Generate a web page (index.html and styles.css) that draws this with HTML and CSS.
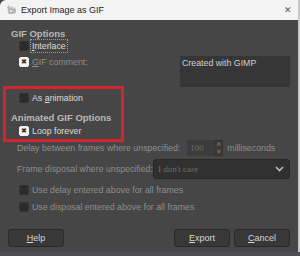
FILE: index.html
```html
<!DOCTYPE html>
<html lang="en">
<head>
    <meta charset="UTF-8">
    <title>Export Image as GIF</title>
    <link rel="stylesheet" href="styles.css">
</head>
<body>
    <div class="window">
        <div class="titlebar">
            <svg class="app-icon" width="12" height="12" viewBox="0 0 12 12">
                <path d="M1 3 L3 1 L4 4 L6 2 L7 5 L9 3 L10 6 Q11 9 7 10 L3 10 Q1 8 2 6 Z" fill="#b8b8b8"/>
                <circle cx="5" cy="7" r="1" fill="#f3f3f3"/>
            </svg>
            <span class="title">Export Image as GIF</span>
            <span class="close">&#x2715;</span>
        </div>

        <div class="content">
            <div class="heading">GIF Options</div>
            <div class="row check">
                <span class="box"></span>
                <span class="label focus"><u>I</u>nterlace</span>
            </div>
            <div class="comment-row">
                <div class="row check">
                    <span class="box checked">&#x2716;</span>
                    <span class="label dim"><u>G</u>IF comment:</span>
                </div>
                <div class="comment">Created with GIMP</div>
            </div>

            <div class="row check gap-anim">
                <span class="box"></span>
                <span class="label">As <u>a</u>nimation</span>
            </div>
            <div class="heading gap-head">Animated GIF Options</div>
            <div class="row check gap-loop">
                <span class="box checked">&#x2716;</span>
                <span class="label">Loop forever</span>
            </div>

            <div class="row field gap-delay">
                <span class="label dim">Delay between frames where unspecified:</span>
                <div class="spin">
                    <span class="spin-value">100</span>
                    <div class="spin-buttons">
                        <span class="spin-btn">&#x2C4;</span>
                        <span class="spin-btn">&#x2C5;</span>
                    </div>
                </div>
                <span class="label dim">milliseconds</span>
            </div>
            <div class="row field gap-disposal">
                <span class="label dim">Frame disposal where unspecified:</span>
                <div class="select">
                    <span>I don't care</span>
                    <svg width="9" height="6" viewBox="0 0 9 6"><path d="M1 1 L4.5 4.5 L8 1" stroke="#bdbdbd" stroke-width="1.6" fill="none"/></svg>
                </div>
            </div>

            <div class="row check gap-use1">
                <span class="box"></span>
                <span class="label dim">Use delay entered above for all frames</span>
            </div>
            <div class="row check gap-use2">
                <span class="box"></span>
                <span class="label dim">Use disposal entered above for all frames</span>
            </div>

            <div class="buttons">
                <button class="btn"><u>H</u>elp</button>
                <div class="spacer"></div>
                <button class="btn"><u>E</u>xport</button>
                <button class="btn"><u>C</u>ancel</button>
            </div>

            <div class="highlight"></div>
        </div>
    </div>
</body>
</html>
```

FILE: styles.css
```css
body {
    margin: 0;
    width: 300px;
    height: 256px;
    background: #4f4c52;
    font-family: 'Liberation Sans', 'Noto Sans', sans-serif;
    font-size: 8.8px;
    overflow: hidden;
}

.window {
    width: 298px;
    height: 252px;
    background: #464646;
    border-right: 2px solid #c9c9c9;
    display: flex;
    flex-direction: column;
}

.titlebar {
    height: 20px;
    background: #f3f3f3;
    border-top-left-radius: 6px;
    display: flex;
    align-items: center;
    padding-left: 6px;
    color: #1c1c1c;
    font-size: 9px;
}

.app-icon {
    margin-right: 3px;
}

.title {
    flex: 1;
}

.close {
    width: 20px;
    text-align: center;
    color: #555;
    font-size: 9px;
}

.content {
    position: relative;
    flex: 1;
    padding: 8px 8px 0 11px;
    color: #dcdcdc;
}

.heading {
    height: 12px;
    line-height: 12px;
    font-weight: bold;
    color: #b8b8b8;
    font-size: 9.5px;
}

.row {
    display: flex;
    align-items: center;
    height: 12px;
}

.check {
    padding-left: 8px;
}

.field {
    padding-left: 6px;
}

.box {
    width: 8px;
    height: 8px;
    border-radius: 2px;
    background: #2b2b2b;
    border: 1px solid #333;
    margin-right: 3px;
    flex: none;
    font-size: 7px;
    line-height: 8px;
    text-align: center;
    color: #2b2b2b;
}

.box.checked {
    background: #f2f2f2;
    border-color: #f2f2f2;
}

.label {
    white-space: nowrap;
}

.focus {
    outline: 1px dotted #9a9a9a;
    outline-offset: 1px;
}

.dim {
    color: #8e8e8e;
}

.comment-row {
    display: flex;
    align-items: flex-start;
    justify-content: space-between;
    margin-top: 4px;
}

.comment {
    width: 110px;
    height: 31px;
    padding: 2px;
    box-sizing: border-box;
    background: #363636;
    color: #d0d0d0;
}

.gap-anim { margin-top: 5px; }
.gap-head { margin-top: 8px; }
.gap-loop { margin-top: 1px; }
.gap-delay { margin-top: 3px; height: 16px; }
.gap-disposal { margin-top: 3px; height: 20px; }
.gap-use1 { margin-top: 5px; }
.gap-use2 { margin-top: 5px; }

.spin {
    display: flex;
    height: 16px;
    margin-left: 7px;
    margin-right: 4px;
}

.spin-value {
    width: 27px;
    background: #3c3c3c;
    color: #6c6c6c;
    padding-left: 3px;
    box-sizing: border-box;
    line-height: 16px;
    border-radius: 2px 0 0 2px;
    font-family: 'Liberation Serif', serif;
}

.spin-buttons {
    display: flex;
    flex-direction: column;
    width: 9px;
    border: 1px solid #333;
    box-sizing: border-box;
}

.spin-btn {
    flex: 1;
    background: #3a3a3a;
    color: #9a9a9a;
    font-size: 7px;
    line-height: 7px;
    text-align: center;
}

.select {
    display: flex;
    align-items: center;
    justify-content: space-between;
    width: 137px;
    height: 20px;
    box-sizing: border-box;
    margin-left: auto;
    padding: 0 5px 0 4px;
    background: #303030;
    border: 1px solid #282828;
    border-radius: 3px;
    color: #6f6f6f;
    font-family: 'Liberation Serif', serif;
    font-size: 9px;
}

.buttons {
    display: flex;
    margin-top: 16px;
    gap: 4px;
}

.spacer {
    flex: 1;
}

.btn {
    width: 56px;
    height: 18px;
    padding: 0;
    background: #383838;
    border: 1px solid #2a2a2a;
    border-radius: 3px;
    color: #d6d6d6;
    font-family: inherit;
    font-size: 9px;
}

.btn:first-child {
    margin-left: -3px;
}

.highlight {
    position: absolute;
    left: 3px;
    top: 66px;
    width: 115px;
    height: 50px;
    border: 3px solid #d42331;
}
```
